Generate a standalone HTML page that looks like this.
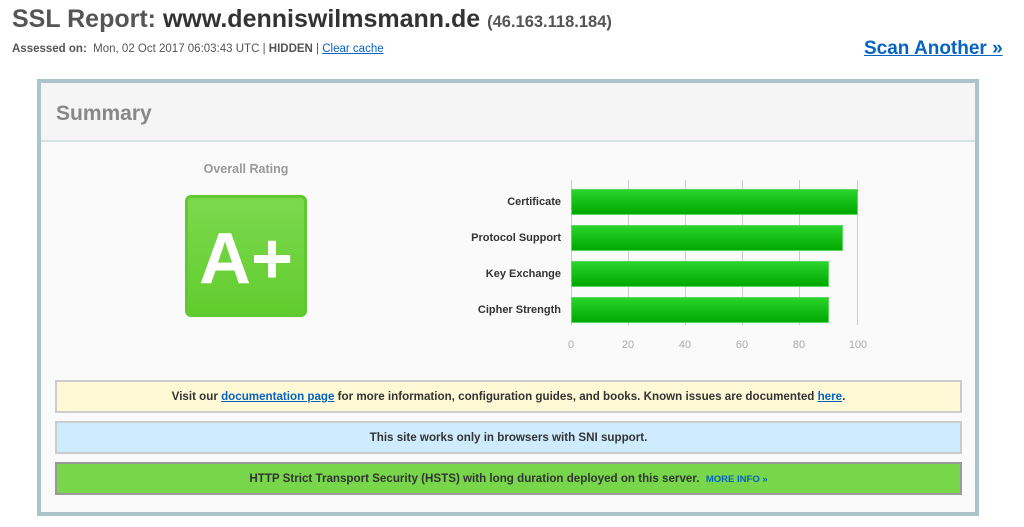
<!DOCTYPE html>
<html><head><meta charset="utf-8"><style>
body{margin:0;width:1024px;height:527px;background:#fff;font-family:"Liberation Sans",Arial,sans-serif;position:relative;overflow:hidden}
.a{position:absolute}
h1{position:absolute;left:12px;top:5px;margin:0;font-size:25px;font-weight:bold;color:#555;white-space:nowrap}
h1 b{color:#333}
h1 small{font-size:16.5px;color:#555}
.as{left:12px;top:43px;font-size:11.5px;color:#555;white-space:nowrap}
a{color:#0563c1;text-decoration:underline}
.box{left:37px;top:79px;width:934px;height:429px;border:4px solid #a9c5c7;background:#fafafa}
.hd{left:0;top:0;width:934px;height:57px;background:#f5f5f5;border-bottom:2px solid #d8e2e3}
.bar{position:absolute;left:571px;height:26px;background:linear-gradient(#2ad42a,#00a800);border:1px solid #5cd65c;box-sizing:border-box}
.gl{position:absolute;top:180px;width:1px;height:145px;background:#ccc}
.lbl{position:absolute;right:463px;font-size:11px;font-weight:bold;color:#333;white-space:nowrap}
.tk{position:absolute;top:339px;font-size:11px;color:#aaa;width:30px;text-align:center}
.n{position:absolute;left:55px;width:903px;height:29px;border:2px solid #ccc;font-size:11.6px;font-weight:bold;color:#333;text-align:center;line-height:29px;white-space:nowrap}
</style></head><body>
<h1>SSL Report: <b>www.denniswilmsmann.de</b> <small>(46.163.118.184)</small></h1>
<div class="a as"><b>Assessed on:</b>&nbsp; Mon, 02 Oct 2017 06:03:43 UTC | <b>HIDDEN</b> | <a>Clear cache</a></div>
<div class="a" style="left:864px;top:38px;font-size:19px;font-weight:bold"><a>Scan Another »</a></div>
<div class="a box"><div class="a hd"><div class="a" style="left:15px;top:19px;font-size:21px;font-weight:bold;color:#888">Summary</div></div></div>
<div class="a" style="left:175px;top:162px;width:142px;text-align:center;font-size:12.5px;font-weight:bold;color:#999">Overall Rating</div>
<div class="a" style="left:185px;top:195px;width:122px;height:122px;box-sizing:border-box;border:3px solid #5fc833;border-radius:6px;background:linear-gradient(#7bd94e,#62cc2e);color:#fff;font-size:72px;font-weight:bold;text-align:center;line-height:122px">A+</div>
<div class="gl" style="left:571px"></div><div class="gl" style="left:628px"></div><div class="gl" style="left:685px"></div><div class="gl" style="left:742px"></div><div class="gl" style="left:799px"></div><div class="gl" style="left:857px"></div>
<div class="bar" style="top:189px;width:287px"></div>
<div class="bar" style="top:225px;width:272px"></div>
<div class="bar" style="top:261px;width:258px"></div>
<div class="bar" style="top:297px;width:258px"></div>
<div class="lbl" style="top:196px">Certificate</div>
<div class="lbl" style="top:232px">Protocol Support</div>
<div class="lbl" style="top:268px">Key Exchange</div>
<div class="lbl" style="top:304px">Cipher Strength</div>
<div class="tk" style="left:556px">0</div><div class="tk" style="left:613px">20</div><div class="tk" style="left:670px">40</div><div class="tk" style="left:727px">60</div><div class="tk" style="left:784px">80</div><div class="tk" style="left:843px">100</div>
<div class="n" style="top:380px;background:#fff9d6">Visit our <a>documentation page</a> for more information, configuration guides, and books. Known issues are documented <a>here</a>.</div>
<div class="n" style="top:421px;background:#ceecfd">This site works only in browsers with SNI support.</div>
<div class="n" style="top:462px;background:#78d64b;border-color:#999">HTTP Strict Transport Security (HSTS) with long duration deployed on this server. &nbsp;<a style="font-size:9.5px;color:#0563c1;text-decoration:none">MORE INFO »</a></div>
</body></html>
